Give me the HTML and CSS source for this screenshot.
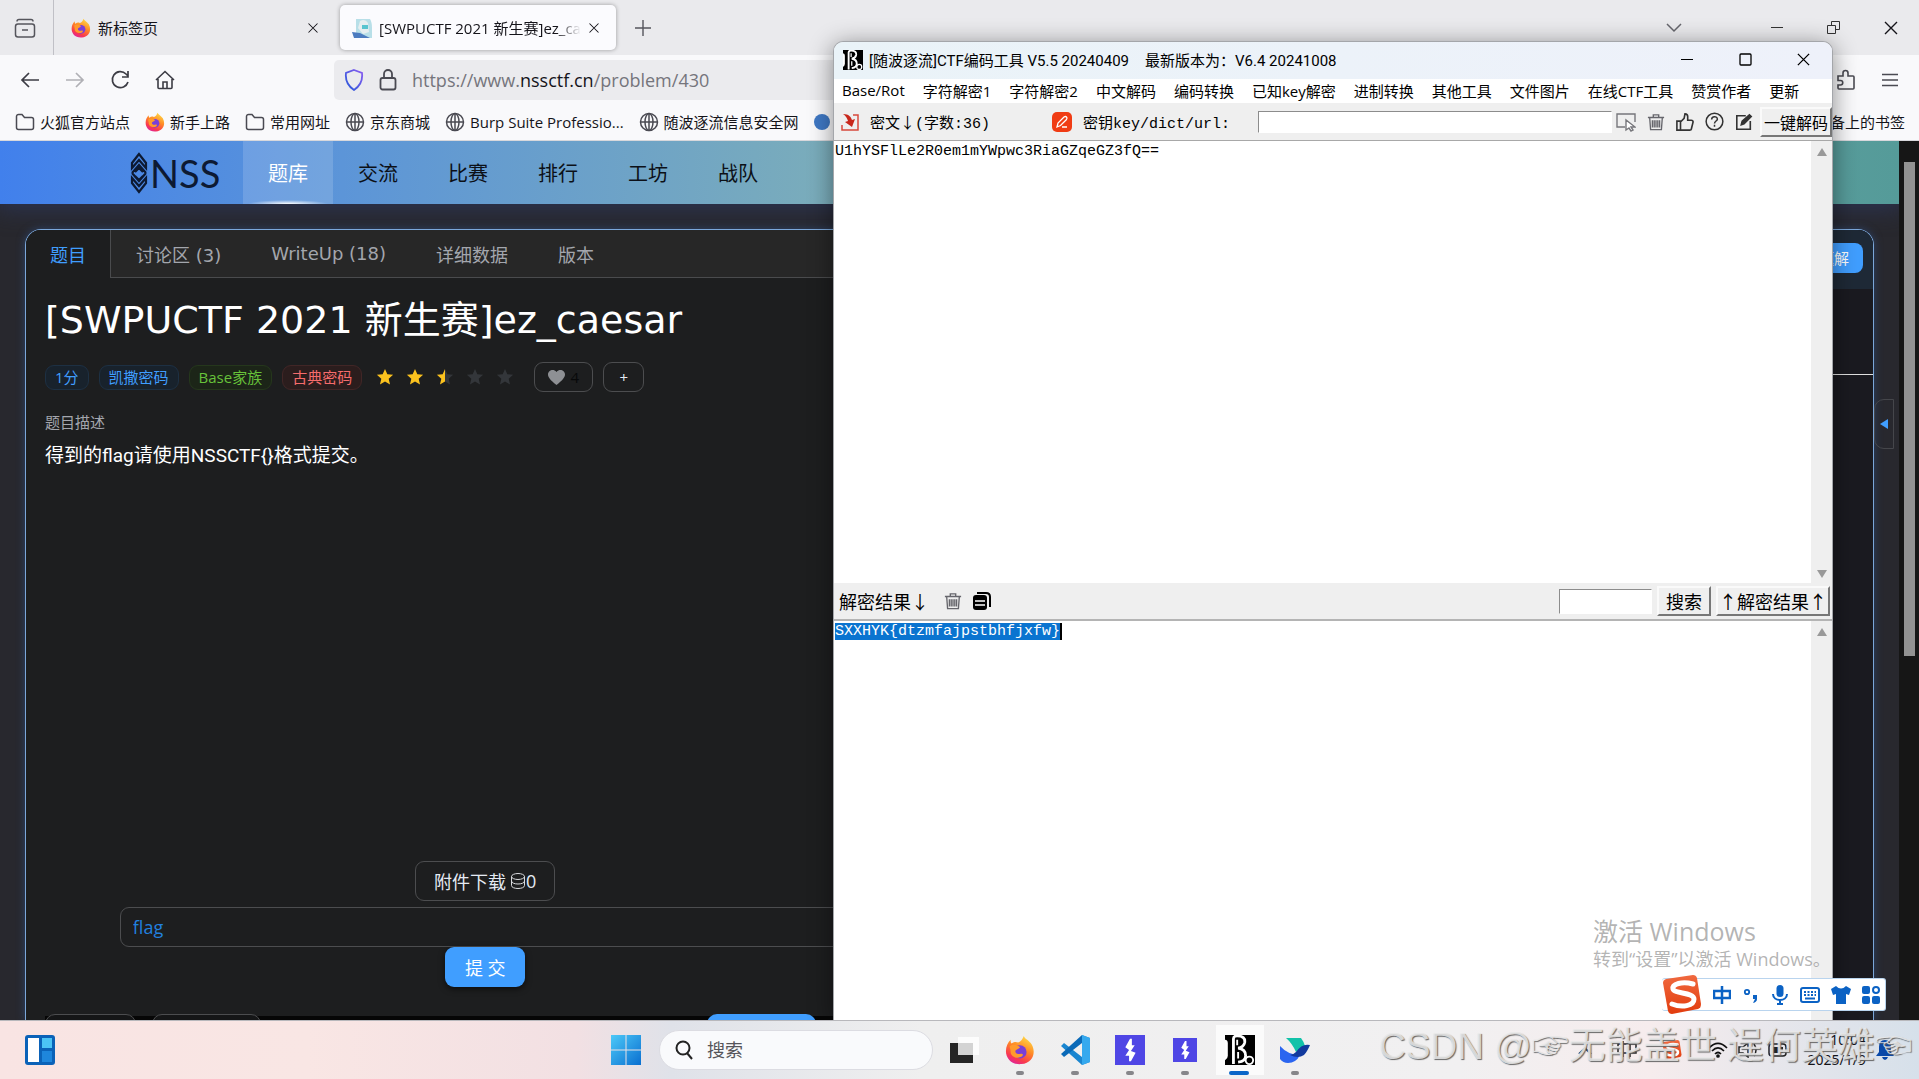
FILE: index.html
```html
<!DOCTYPE html>
<html lang="zh-CN">
<head>
    <meta charset="UTF-8">
    <meta name="viewport" content="width=device-width, initial-scale=1.0">
    <title>[SWPUCTF 2021 新生赛]ez_caesar</title>
    <link rel="stylesheet" href="styles.css">
</head>
<body>
    <svg class="sprite" aria-hidden="true">
        <defs>
            <linearGradient id="fire" x1="0.8" y1="0" x2="0.3" y2="1">
                <stop offset="0" stop-color="#ffe14a"/>
                <stop offset="0.45" stop-color="#ff8a26"/>
                <stop offset="0.8" stop-color="#f9394e"/>
                <stop offset="1" stop-color="#e0259a"/>
            </linearGradient>
            <linearGradient id="win" x1="0" y1="0" x2="1" y2="1">
                <stop offset="0" stop-color="#4cc9f8"/>
                <stop offset="1" stop-color="#0a6fd0"/>
            </linearGradient>
            <linearGradient id="shieldLine" x1="0" y1="1" x2="1" y2="0">
                <stop offset="0" stop-color="#2458d8"/>
                <stop offset="1" stop-color="#8a5cf0"/>
            </linearGradient>
            <linearGradient id="sogou" x1="0" y1="0" x2="0" y2="1">
                <stop offset="0" stop-color="#f0693f"/>
                <stop offset="1" stop-color="#e23c0d"/>
            </linearGradient>
        </defs>
        <symbol id="firefox" viewBox="0 0 32 32">
            <path fill="url(#fire)" d="M20 1c1 3 6 5 8.500 9 5 9 1 20-11 21C7 32 1 25 1 17c0-5 2-9 5-12 0 2 0 3 1 4 3-2 5-2 7-1 3-1 5-4 6-7z"/>
            <circle cx="16" cy="18" r="7" fill="#7a3fd8"/>
            <path fill="#ff9a2c" d="M5 12c4-3 9-1 11 1-1 2-4 2-5 4 0 3 3 4 6 3 2 0 3 1 1 3-5 3-12 0-12-5 0-3-1-4-1-6z"/>
        </symbol>
        <symbol id="folder" viewBox="0 0 20 20">
            <path fill="none" stroke="#4a4a52" stroke-width="1.5" d="M1.500 4.500a2 2 0 0 1 2-2h3.500l2.500 3h7a2 2 0 0 1 2 2v8a2 2 0 0 1-2 2h-13a2 2 0 0 1-2-2z"/>
        </symbol>
        <symbol id="globe" viewBox="0 0 20 20">
            <g fill="none" stroke="#4a4a52" stroke-width="1.500">
                <circle cx="10" cy="10" r="8.500"/>
                <ellipse cx="10" cy="10" rx="4" ry="8.500"/>
                <path d="M1.500 10h17M10 1.500v17"/>
            </g>
        </symbol>
        <symbol id="close" viewBox="0 0 16 16">
            <path fill="none" stroke="currentColor" stroke-width="1.400" d="M2 2l12 12M14 2L2 14"/>
        </symbol>
        <symbol id="trash" viewBox="0 0 20 20">
            <g fill="none" stroke="#66666c" stroke-width="1.500">
                <path d="M1 5h18M7 4.500V2h6v2.500M3 5.500l1 13h12l1-13M8 8v8M10 8v8M12 8v8M6 8v8M14 8v8"/>
            </g>
        </symbol>
        <symbol id="star" viewBox="0 0 20 20">
            <path d="M10 1l2.600 6 6.400.600-4.900 4.300 1.500 6.500L10 15l-5.600 3.400 1.500-6.500L1 7.600 7.400 7z"/>
        </symbol>
        <symbol id="bolt" viewBox="0 0 32 32">
            <path fill="#4f46e5" d="M0 0h32v32H0z"/>
            <path fill="#fff" d="M16 4h2v7h3l-4 6 5 2-5 9h-2v-6h-4l4-6-4-3z"/>
        </symbol>
        <symbol id="blogo" viewBox="0 0 32 32">
            <path d="M0 0h32v32H0z"/>
            <path fill="#fff" d="M0 5q3 0 3 4v13q0 3-3 5z"/>
            <path fill="none" stroke="#fff" stroke-width="3" d="M9 31V4q0-3 4-3 9 0 8 7-1 5-7 6 8 1 8 8 0 6-8 7"/>
            <path fill="none" stroke="#fff" stroke-width="2" d="M13 5v6M14 18v7"/>
            <circle cx="26" cy="27" r="4" fill="none" stroke="#fff" stroke-width="2"/>
        </symbol>
        <symbol id="slogo" viewBox="0 0 40 40">
            <path fill="url(#sogou)" d="M1 8q0-3 3-4L31 0q3 0 4 3l4 26q0 4-3 5L10 39q-3 0-4-3z"/>
            <path fill="none" stroke="#fff" stroke-width="5" stroke-linecap="round" d="M31 9C20 6 10 9 11 14s21 3 21 10-12 9-22 5"/>
        </symbol>
    </svg>

    <main class="browser">
        <div class="tabstrip">
            <button class="icon-btn recent" aria-label="最近浏览">
                <svg width="22" height="22" viewBox="0 0 22 22" fill="none" stroke="#55555c" stroke-width="1.500"><rect x="1.500" y="7" width="19" height="13" rx="2.500"/><path d="M3 4.500q0-2 2-2h12q2 0 2 2M8 13h6"/></svg>
            </button>
            <div class="tab">
                <svg width="20" height="20"><use href="#firefox"/></svg>
                <span class="tab-title">新标签页</span>
                <button class="icon-btn" aria-label="关闭"><svg width="12" height="12"><use href="#close"/></svg></button>
            </div>
            <div class="tab active">
                <svg width="20" height="20" viewBox="0 0 20 20"><path fill="#b8dfe8" d="M4 1h14q2 3 2 9v10H4z"/><path fill="#e6eef0" d="M8 3q5-3 8 2l1 9-6 2-5-6z"/><path fill="#58c4cf" d="M10 7h6v4h-6z"/><path fill="#4c7cc0" d="M0 14l8 1 10 5H2z"/></svg>
                <span class="tab-title fade">[SWPUCTF 2021 新生赛]ez_caesar</span>
                <button class="icon-btn" aria-label="关闭"><svg width="12" height="12"><use href="#close"/></svg></button>
            </div>
            <button class="icon-btn plus" aria-label="新建标签页"><svg width="16" height="16" viewBox="0 0 16 16" stroke="#55555c" stroke-width="1.400"><path d="M8 0v16M0 8h16"/></svg></button>
            <div class="window-controls">
                <button class="icon-btn chevron" aria-label="标签列表"><svg width="16" height="10" viewBox="0 0 16 10" fill="none" stroke="#66666c" stroke-width="1.500"><path d="M1 1l7 7 7-7"/></svg></button>
                <button class="icon-btn" aria-label="最小化"><svg width="12" height="12" viewBox="0 0 12 12" stroke="#333"><path d="M0 5.500h12"/></svg></button>
                <button class="icon-btn" aria-label="还原"><svg width="13" height="13" viewBox="0 0 13 13" fill="none" stroke="#333"><path d="M.500 4.500h8v8h-8zM4.500 4V.500h8v8H9"/></svg></button>
                <button class="icon-btn" aria-label="关闭窗口"><svg width="16" height="16"><use href="#close"/></svg></button>
            </div>
        </div>

        <div class="navbar">
            <div class="nav-buttons">
                <button class="icon-btn" aria-label="后退"><svg width="20" height="16" viewBox="0 0 20 16" fill="none" stroke="#3c3c44" stroke-width="1.700"><path d="M19 8H2M9 1L2 8l7 7"/></svg></button>
                <button class="icon-btn" aria-label="前进"><svg width="20" height="16" viewBox="0 0 20 16" fill="none" stroke="#b0b0b5" stroke-width="1.700"><path d="M1 8h17M11 1l7 7-7 7"/></svg></button>
                <button class="icon-btn" aria-label="刷新"><svg width="20" height="20" viewBox="0 0 20 20" fill="none" stroke="#3c3c44" stroke-width="1.700"><path d="M18 12a8 8 0 1 1-2-8l2 2M18 1v6h-6"/></svg></button>
                <button class="icon-btn" aria-label="主页"><svg width="20" height="20" viewBox="0 0 20 20" fill="none" stroke="#3c3c44" stroke-width="1.600"><path d="M1 10l9-8.500L19 10M3 9v8.500q0 1 1 1h12q1 0 1-1V9M8 18v-6h4v6"/></svg></button>
            </div>
            <div class="urlbar">
                <svg width="20" height="22" viewBox="0 0 20 22" fill="none" stroke="url(#shieldLine)" stroke-width="1.800"><path d="M10 1l8 3c1 8-2 13-8 17C4 17 1 12 2 4z"/></svg>
                <svg width="18" height="22" viewBox="0 0 18 22" fill="none" stroke="#4a4a52" stroke-width="1.800"><rect x="1.500" y="9" width="15" height="11.500" rx="2"/><path d="M5 9V5a4 4 0 0 1 8 0v4"/></svg>
                <a class="url" href="#">https://www.<b>nssctf.cn</b>/problem/430</a>
            </div>
            <button class="icon-btn ext" aria-label="扩展"><svg width="20" height="22" viewBox="0 0 20 22" fill="none" stroke="#4a4a52" stroke-width="1.600"><path d="M2 7h5V4a2.500 2.500 0 0 1 5 0v3h5q1 0 1 1v11q0 1-1 1H3q-1 0-1-1v-3h2.500a2 2 0 0 0 0-4.500H2z"/></svg></button>
            <button class="icon-btn" aria-label="菜单"><svg width="16" height="14" viewBox="0 0 16 14" stroke="#4a4a52" stroke-width="1.500"><path d="M0 1.500h16M0 7h16M0 12.500h16"/></svg></button>
        </div>

        <nav class="bookmarks">
            <a href="#"><svg width="20" height="20"><use href="#folder"/></svg>火狐官方站点</a>
            <a href="#"><svg width="20" height="20"><use href="#firefox"/></svg>新手上路</a>
            <a href="#"><svg width="20" height="20"><use href="#folder"/></svg>常用网址</a>
            <a href="#"><svg width="20" height="20"><use href="#globe"/></svg>京东商城</a>
            <a href="#"><svg width="20" height="20"><use href="#globe"/></svg>Burp Suite Professio...</a>
            <a href="#"><svg width="20" height="20"><use href="#globe"/></svg>随波逐流信息安全网</a>
            <a href="#"><svg width="16" height="16" viewBox="0 0 16 16"><circle cx="8" cy="8" r="8" fill="#3f78c4"/></svg></a>
            <a class="mobile" href="#"><svg width="20" height="20"><use href="#folder"/></svg>移动设备上的书签</a>
        </nav>

        <div class="viewport">
            <div class="site">
                <header class="site-header">
                    <a class="logo" href="#" aria-label="NSS">
                        <svg width="18" height="42" viewBox="0 0 18 42" fill="none" stroke="#0d1a33" stroke-width="2.200"><path d="M9 2L2 11v5l7-8 7 8v-5zM2 21l7-8 7 8M2 21l7 8 7-8M5 20l4-4 4 4M5 24l4 4 4-4M2 26v5l7 9 7-9v-5l-7 8z"/></svg>
                        <span>NSS</span>
                    </a>
                    <nav class="site-nav">
                        <a class="current" href="#">题库</a>
                        <a href="#">交流</a>
                        <a href="#">比赛</a>
                        <a href="#">排行</a>
                        <a href="#">工坊</a>
                        <a href="#">战队</a>
                    </nav>
                </header>

                <div class="card">
                    <section class="problem">
                        <div class="problem-tabs">
                            <button class="selected">题目</button>
                            <button>讨论区 (3)</button>
                            <button>WriteUp (18)</button>
                            <button>详细数据</button>
                            <button>版本</button>
                        </div>
                        <div class="problem-body">
                            <h1>[SWPUCTF 2021 新生赛]ez_caesar</h1>
                            <div class="tags">
                                <span class="tag blue">1分</span>
                                <span class="tag blue">凯撒密码</span>
                                <span class="tag green">Base家族</span>
                                <span class="tag red">古典密码</span>
                                <span class="stars">
                                    <svg width="18" height="18" fill="#fbc21e"><use href="#star"/></svg>
                                    <svg width="18" height="18" fill="#fbc21e"><use href="#star"/></svg>
                                    <svg width="18" height="18" viewBox="0 0 20 20"><path fill="#33363a" d="M10 1l2.600 6 6.400.600-4.900 4.300 1.500 6.500L10 15z"/><path fill="#fbc21e" d="M10 1v14l-5.600 3.400 1.500-6.500L1 7.600 7.400 7z"/></svg>
                                    <svg width="18" height="18" fill="#33363a"><use href="#star"/></svg>
                                    <svg width="18" height="18" fill="#33363a"><use href="#star"/></svg>
                                </span>
                                <button class="pill like"><svg width="17" height="15" viewBox="0 0 17 15"><path fill="#8e9094" d="M8.500 15C2 10 0 7 0 4.500 0 1 5-2 8.500 2 12-2 17 1 17 4.500 17 7 15 10 8.500 15z"/></svg><span>4</span></button>
                                <button class="pill">+</button>
                            </div>
                            <p class="label">题目描述</p>
                            <p class="desc">得到的flag请使用NSSCTF{}格式提交。</p>
                            <form class="submit-area">
                                <button type="button" class="download">附件下载 <span class="coins"><svg width="16" height="16" viewBox="0 0 16 16" fill="none" stroke="#d8dadd"><ellipse cx="8" cy="3.500" rx="6.500" ry="3"/><path d="M1.500 3.500v9c0 4 13 4 13 0v-9M1.500 8c0 4 13 4 13 0"/></svg>0</span></button>
                                <input type="text" placeholder="flag" aria-label="flag">
                                <button type="button" class="primary">提 交</button>
                            </form>
                            <div class="footer-buttons">
                                <button class="ghost small" aria-label="上一题"></button>
                                <button class="ghost" aria-label="下一题"></button>
                                <button class="blue-btn" aria-label="题解"></button>
                            </div>
                        </div>
                    </section>
                    <aside class="side">
                        <div class="side-head"><button>查看题解</button></div>
                        <div class="side-line"></div>
                    </aside>
                </div>
                <button class="collapse" aria-label="收起"><svg width="8" height="10" viewBox="0 0 8 10"><path fill="#409eff" d="M8 0v10L0 5z"/></svg></button>
            </div>
            <div class="page-scroll"><div class="thumb"></div></div>
        </div>
    </main>

    <section class="tool">
        <div class="titlebar">
            <svg width="20" height="20"><use href="#blogo"/></svg>
            <span>[随波逐流]CTF编码工具 V5.5 20240409</span>
            <span class="latest">最新版本为：V6.4 20241008</span>
            <div class="title-controls">
                <button class="icon-btn" aria-label="最小化"><svg width="12" height="12" viewBox="0 0 12 12" stroke="#000"><path d="M0 5.500h12"/></svg></button>
                <button class="icon-btn" aria-label="最大化"><svg width="13" height="13" viewBox="0 0 13 13" fill="none" stroke="#000" stroke-width="1.300"><rect x="1" y="1" width="11" height="11" rx="1"/></svg></button>
                <button class="icon-btn" aria-label="关闭"><svg width="15" height="15"><use href="#close"/></svg></button>
            </div>
        </div>
        <nav class="menu">
            <a href="#">Base/Rot</a>
            <a href="#">字符解密1</a>
            <a href="#">字符解密2</a>
            <a href="#">中文解码</a>
            <a href="#">编码转换</a>
            <a href="#">已知key解密</a>
            <a href="#">进制转换</a>
            <a href="#">其他工具</a>
            <a href="#">文件图片</a>
            <a href="#">在线CTF工具</a>
            <a href="#">赞赏作者</a>
            <a href="#">更新</a>
        </nav>
        <div class="toolbar">
            <svg width="18" height="18" viewBox="0 0 18 18"><path fill="none" stroke="#d8493c" stroke-width="1.500" d="M12 2h5v15H1v-5"/><path fill="#c8281c" d="M2 1c6 0 8 3 9 6l3-1-3 8-7-5 3-1C6 5 5 3 2 1z"/></svg>
            <label class="cipher" for="cipher">密文<span class="arrow">↓</span>(字数:36)</label>
            <svg class="pen" width="20" height="20" viewBox="0 0 20 20"><rect width="20" height="20" rx="5" fill="#f03c14"/><path fill="none" stroke="#fff" stroke-width="1.300" d="M5 15l1-4 6-6q1.500-1 2.500 0t0 2.500l-6 6zM10 15h5"/></svg>
            <label for="key">密钥key/dict/url:</label>
            <input type="text" id="key">
            <div class="tool-icons">
                <svg width="20" height="20" viewBox="0 0 20 20" fill="none" stroke="#77777c" stroke-width="1.400"><path d="M9 15H1V2h18v8"/><path fill="#fff" d="M10 8v10l3-2 2 3 2-1-2-3h4z"/></svg>
                <svg width="18" height="18"><use href="#trash"/></svg>
                <svg width="18" height="18" viewBox="0 0 20 20" fill="none" stroke="#333" stroke-width="1.800"><path d="M1 9h4v10H1zM5 10l4-4 1-5q3 0 3 3v4h4q2 0 2 2l-2 8q0 1-2 1H5"/></svg>
                <svg width="19" height="19" viewBox="0 0 20 20" fill="none" stroke="#333" stroke-width="1.600"><circle cx="10" cy="10" r="8.800"/><path d="M7 8c0-4 6-4 6-.500C13 9.500 10 9.500 10 12M10 13.500v2"/></svg>
                <svg width="18" height="18" viewBox="0 0 20 20" fill="none" stroke="#333" stroke-width="1.800"><path d="M12 3H2v15h15V9"/><path fill="#333" d="M7 13l1-4 8-7 2 2-8 8z"/></svg>
            </div>
            <button class="raised">一键解码</button>
        </div>
        <div class="pane">
            <textarea id="cipher" spellcheck="false">U1hYSFlLe2R0em1mYWpwc3RiaGZqeGZ3fQ==</textarea>
            <div class="pane-scroll"><i class="up"></i><i class="down"></i></div>
        </div>
        <div class="midbar">
            <span>解密结果<span class="arrow">↓</span></span>
            <svg width="18" height="18"><use href="#trash"/></svg>
            <svg width="20" height="20" viewBox="0 0 20 20"><path fill="none" stroke="#000" stroke-width="2" d="M5 2h9q4 0 4 4v10"/><rect x="1" y="4" width="14" height="15" rx="3"/><path stroke="#fff" stroke-width="1.500" d="M3 10h10M3 14h10"/></svg>
            <input type="text" aria-label="搜索">
            <button class="raised">搜索</button>
            <button class="raised wide"><span class="arrow">↑</span>解密结果<span class="arrow">↑</span></button>
        </div>
        <div class="pane result">
            <div class="output" contenteditable="true" role="textbox" aria-label="解密结果" spellcheck="false"><mark>SXXHYK{dtzmfajpstbhfjxfw}</mark></div>
            <div class="pane-scroll"><i class="up"></i></div>
        </div>
    </section>

    <div class="activate">
        <p class="big">激活 Windows</p>
        <p>转到“设置”以激活 Windows。</p>
    </div>

    <div class="ime">
        <svg class="ime-logo" width="40" height="40"><use href="#slogo"/></svg>
        <svg width="18" height="18" viewBox="0 0 18 18" fill="none" stroke="#0b62c4" stroke-width="2.500"><path d="M1 5h16v7H1zM9 0v18"/></svg>
        <svg width="18" height="18" viewBox="0 0 18 18"><circle cx="5" cy="6" r="2.200" fill="none" stroke="#0b62c4" stroke-width="1.800"/><path fill="#0b62c4" d="M11 9h4v4q0 3-4 4l2-4h-2z"/></svg>
        <svg width="18" height="20" viewBox="0 0 18 20"><rect x="5.500" width="7" height="12" rx="3.500" fill="#0b62c4"/><path fill="none" stroke="#0b62c4" stroke-width="2" d="M2 9c0 8 14 8 14 0M9 15v3M6 19h6"/></svg>
        <svg width="20" height="16" viewBox="0 0 20 16"><rect x="1" y="1" width="18" height="14" rx="2" fill="none" stroke="#0b62c4" stroke-width="2"/><path stroke="#0b62c4" stroke-width="2" stroke-dasharray="2 1.500" d="M4 5h12M4 8h12"/><path stroke="#0b62c4" stroke-width="2" d="M5 11.500h10"/></svg>
        <svg width="20" height="18" viewBox="0 0 20 18"><path fill="#0b62c4" d="M5 0q5 5 10 0l5 3-2 6-3-1v10H5V8L2 9 0 3z"/></svg>
        <svg width="18" height="18" viewBox="0 0 18 18" fill="#0b62c4"><rect width="8" height="8" rx="2"/><rect y="10" width="8" height="8" rx="2"/><rect x="10" y="10" width="8" height="8" rx="2"/><circle cx="14" cy="4" r="3" fill="none" stroke="#0b62c4" stroke-width="2"/></svg>
    </div>

    <footer class="taskbar">
        <button class="icon-btn widgets" aria-label="小组件"><svg width="30" height="30" viewBox="0 0 30 30"><rect width="30" height="30" rx="3" fill="#0b62b8"/><rect x="3" y="3" width="11" height="24" fill="#fff"/><rect x="17" y="3" width="10" height="10" fill="#4cc4f5"/><rect x="17" y="16" width="10" height="11" fill="#1e86dc"/></svg></button>
        <div class="apps">
            <button class="icon-btn" aria-label="开始"><svg width="30" height="30" viewBox="0 0 30 30" fill="url(#win)"><path d="M0 0h14.500v14.500H0zM15.500 0H30v14.500H15.500zM0 15.500h14.500V30H0zM15.500 15.500H30V30H15.500z"/></svg></button>
            <label class="search">
                <svg width="20" height="20" viewBox="0 0 20 20" fill="none" stroke="#222" stroke-width="2"><circle cx="9" cy="8" r="6.500"/><path d="M13 13l5 6"/></svg>
                <input type="text" placeholder="搜索" aria-label="搜索">
            </label>
            <button class="app" aria-label="任务视图"><svg width="30" height="30" viewBox="0 0 30 30"><path fill="#252525" d="M0 8h23v20H0z"/><path fill="#fff" opacity="0.800" d="M8 2h21v18H8z"/></svg></button>
            <button class="app run" aria-label="Firefox"><svg width="30" height="30"><use href="#firefox"/></svg></button>
            <button class="app run" aria-label="VS Code"><svg width="30" height="30" viewBox="0 0 30 30"><path fill="#1a86d0" d="M22 0l8 3v24l-8 3L1 11l3-3 18 14z"/><path fill="#0a6ab8" d="M22 0v8L4 22l-3-3z"/><path fill="#35a9ee" d="M22 0l8 3v24l-8 3z"/></svg></button>
            <button class="app run" aria-label="Burp Suite"><svg width="30" height="30"><use href="#bolt"/></svg></button>
            <button class="app run" aria-label="Burp Suite"><svg width="24" height="24"><use href="#bolt"/></svg></button>
            <button class="app run focus" aria-label="CTF编码工具"><svg width="30" height="30"><use href="#blogo"/></svg></button>
            <button class="app run" aria-label="飞书"><svg width="30" height="30" viewBox="0 0 30 30"><path fill="#12c2a9" d="M6 3h15q3 4 4 8l-9 6Q12 8 6 3z"/><path fill="#2b65f0" d="M0 11q8 9 20 9-4 8-12 8-5 0-8-4z"/><path fill="#123a9e" d="M30 10q-8-2-14 7-3 3-6 3 8 4 14 0 3-3 6-10z"/></svg></button>
        </div>
        <div class="tray">
            <div class="tray-apps">
                <svg width="14" height="9" viewBox="0 0 14 9" fill="none" stroke="#222" stroke-width="1.800"><path d="M1 8l6-6 6 6"/></svg>
                <svg width="20" height="18" viewBox="0 0 20 18" fill="none" stroke="#222" stroke-width="1.500"><path d="M1 3h18v9H1zM6 0v16M13 0v16"/></svg>
                <svg width="20" height="20"><use href="#slogo"/></svg>
            </div>
            <div class="tray-system">
                <svg width="20" height="16" viewBox="0 0 20 16" fill="none" stroke="#111" stroke-width="1.700"><path d="M1 6q9-9 18 0M4 9q6-6 12 0M7 12q3-3 6 0"/><circle cx="10" cy="14" r="1"/></svg>
                <svg width="20" height="16" viewBox="0 0 20 16" fill="none" stroke="#222" stroke-width="1.500"><path d="M1 5h4l5-4v14l-5-4H1zM13 5q2 3 0 6M16 2q4 6 0 12"/></svg>
                <svg width="22" height="14" viewBox="0 0 22 14"><rect x="1" y="1" width="17" height="12" rx="3" fill="none" stroke="#222" stroke-width="1.500"/><path fill="#222" d="M4 4h11v6H4zM19 5h3v4h-3z"/></svg>
            </div>
            <time class="clock">10:04<br>2025/1/9</time>
            <svg width="18" height="20" viewBox="0 0 18 20" fill="#0a48a8"><path d="M9 0q6 0 6 7v5l3 4H0l3-4V7q0-7 6-7zM6 17h6q-1 3-3 3t-3-3z"/></svg>
        </div>
    </footer>
    <div class="watermark">CSDN @☞无能盖世 逞何英雄☜</div>
</body>
</html>
```
FILE: styles.css
```css
* {
    box-sizing: border-box;
}
body {
    margin: 0;
    height: 100vh;
    display: flex;
    flex-direction: column;
    overflow: hidden;
    position: relative;
    font-family: "Open Sans", "Noto Sans CJK SC", sans-serif;
    font-size: 15px;
    color: #15141a;
}
button, input, textarea {
    font: inherit;
    color: inherit;
}
a {
    color: inherit;
    text-decoration: none;
}
p, h1 {
    margin: 0;
    font-weight: normal;
}
svg {
    flex: none;
    display: block;
}
.sprite {
    position: absolute;
    width: 0;
    height: 0;
}
.icon-btn {
    background: none;
    border: none;
    padding: 0;
    display: flex;
    align-items: center;
    justify-content: center;
    flex: none;
}

/* browser */
.browser {
    flex: 1;
    min-height: 0;
    display: flex;
    flex-direction: column;
}
.tabstrip {
    height: 55px;
    background: #eaeaed;
    display: flex;
    align-items: center;
}
.recent {
    width: 54px;
    height: 55px;
    padding-right: 4px;
    border-right: 1px solid #c0c0c6;
}
.tab {
    width: 276px;
    height: 45px;
    margin-left: 5px;
    padding: 0 16px 0 12px;
    display: flex;
    align-items: center;
    gap: 7px;
}
.tab.active {
    background: #fbfbfe;
    border-radius: 5px;
    box-shadow: 0 0 4px rgba(0, 0, 0, 0.35);
}
.tab-title {
    flex: 1;
    white-space: nowrap;
    overflow: hidden;
}
.fade {
    mask-image: linear-gradient(90deg, #000 88%, transparent);
}
.plus {
    margin-left: 19px;
}
.window-controls {
    margin-left: auto;
    display: flex;
}
.window-controls .icon-btn {
    width: 57px;
}
.window-controls .chevron {
    margin-right: 46px;
}
.navbar {
    height: 50px;
    background: #f9f9fb;
    display: flex;
    align-items: center;
    padding: 0 21px 0 20px;
}
.nav-buttons {
    display: flex;
    gap: 25px;
    width: 314px;
}
.urlbar {
    flex: 1;
    height: 40px;
    background: #ebebee;
    border-radius: 5px;
    display: flex;
    align-items: center;
    gap: 15px;
    padding-left: 10px;
}
.url {
    font-size: 18px;
    color: #75757c;
}
.url b {
    font-weight: normal;
    color: #15141a;
}
.ext {
    margin: 0 26px 0 240px;
}
.bookmarks {
    height: 36px;
    background: #f9f9fb;
    border-bottom: 1px solid #d8d8dc;
    display: flex;
    align-items: center;
    gap: 15px;
    padding: 0 14px 2px 15px;
    white-space: nowrap;
}
.bookmarks a {
    display: flex;
    align-items: center;
    gap: 5px;
}
.bookmarks .mobile {
    margin-left: auto;
}

/* site */
.viewport {
    flex: 1;
    min-height: 0;
    display: flex;
    overflow: hidden;
}
.site {
    flex: 1;
    min-width: 0;
    background: #28282e;
    display: flex;
    flex-direction: column;
    position: relative;
}
.page-scroll {
    width: 20px;
    background: #161616;
    padding: 21px 4px 0 5px;
    position: relative;
}
.thumb {
    height: 494px;
    background: #929292;
}
.site-header {
    height: 63px;
    flex: none;
    display: flex;
    align-items: center;
    padding-left: 130px;
    background: linear-gradient(90deg, #4180ec, #5c95d8 18%, #7badba 44%, #559b99);
    box-shadow: 0 0 24px 4px #2c3555;
}
.logo {
    width: 113px;
    display: flex;
    align-items: center;
    gap: 2px;
    font-family: Lato, sans-serif;
    font-size: 38px;
    color: #0d1a33;
}
.site-nav {
    display: flex;
    align-self: stretch;
}
.site-nav a {
    width: 90px;
    display: flex;
    align-items: center;
    justify-content: center;
    font-size: 20px;
    color: #0c1017;
}
.site-nav .current {
    color: #fff;
    background: radial-gradient(ellipse 40px 4px at 50% 100%, #fff, transparent), rgba(255, 255, 255, 0.15);
}
.card {
    flex: 1;
    min-height: 0;
    margin: 25px 25px 0;
    border: 1px solid #7ba7d9;
    border-bottom: none;
    border-radius: 16px 16px 0 0;
    display: flex;
    overflow: hidden;
    background: #1d1e1f;
    box-shadow: 0 0 8px #2d4368;
}
.problem {
    flex: 1;
    min-width: 0;
    display: flex;
    flex-direction: column;
}
.problem-tabs {
    display: flex;
    background: #272727;
    font-size: 18px;
}
.problem-tabs button {
    height: 48px;
    padding: 0 25px;
    background: none;
    border: none;
    border-bottom: 1px solid #4a4b4d;
    color: #a3a6ad;
    font-family: "DejaVu Sans", "Noto Sans CJK SC", sans-serif;
    white-space: nowrap;
}
.problem-tabs button:last-child {
    flex: 1;
    text-align: left;
}
.problem-tabs .selected {
    background: #1d1e1f;
    color: #409eff;
    border-bottom: none;
    border-right: 1px solid #4a4b4d;
    padding: 0 24px;
}
.problem-body {
    flex: 1;
    display: flex;
    flex-direction: column;
    align-items: flex-start;
    padding: 12px 24px 0 19px;
}
h1 {
    font-family: "DejaVu Sans", "Noto Sans CJK SC", sans-serif;
    font-size: 38px;
    line-height: 60px;
    color: #fff;
}
.tags {
    display: flex;
    align-items: center;
    gap: 10px;
    margin-top: 11px;
    height: 32px;
}
.tag {
    height: 25px;
    line-height: 23px;
    padding: 0 9px;
    border: 1px solid;
    border-radius: 9px;
}
.tag.blue {
    background: #18222c;
    border-color: #1d3043;
    color: #409eff;
}
.tag.green {
    background: #1c2518;
    border-color: #25371c;
    color: #67c23a;
}
.tag.red {
    background: #2b1d1d;
    border-color: #412626;
    color: #f56c6c;
}
.stars {
    display: flex;
    gap: 12px;
    margin: 0 10px 0 4px;
}
.pill {
    height: 30px;
    min-width: 41px;
    padding: 0 12px;
    display: flex;
    align-items: center;
    justify-content: center;
    gap: 5px;
    background: none;
    border: 1px solid #4c4d4f;
    border-radius: 9px;
    color: #e5eaf3;
}
.like {
    width: 59px;
    color: #08090a;
}
.label {
    margin-top: 17px;
    line-height: 24px;
    color: #a3a6ad;
}
.desc {
    margin-top: 8px;
    font-family: Roboto, "Noto Sans CJK SC", sans-serif;
    font-size: 19px;
    line-height: 28px;
    color: #fff;
}
.submit-area {
    align-self: stretch;
    margin-top: auto;
    display: flex;
    flex-direction: column;
    align-items: center;
}
.download {
    height: 40px;
    padding: 0 18px;
    display: flex;
    align-items: center;
    gap: 4px;
    background: none;
    border: 1px solid #4c4d4f;
    border-radius: 9px;
    font-size: 18px;
    color: #e5eaf3;
    margin-bottom: 6px;
}
.coins {
    display: flex;
    align-items: center;
}
.submit-area input {
    width: 83%;
    height: 40px;
    padding: 0 12px;
    background: none;
    border: 1px solid #4c4d4f;
    border-radius: 9px;
    font-size: 18px;
}
.submit-area input::placeholder {
    color: #2280df;
}
.primary {
    width: 80px;
    height: 40px;
    border: none;
    border-radius: 9px;
    background: #409eff;
    color: #fff;
    font-size: 18px;
    box-shadow: 0 2px 6px rgba(0, 0, 0, 0.6);
}
.footer-buttons {
    align-self: stretch;
    display: flex;
    height: 6px;
    margin-top: 27px;
    padding-right: 110px;
    gap: 16px;
    background: linear-gradient(transparent 2px, #060606 2px);
}
.footer-buttons button {
    height: 40px;
    width: 109px;
    border: 1px solid #4c4d4f;
    border-radius: 10px;
    background: #151617;
    padding: 0;
}
.footer-buttons .small {
    width: 91px;
}
.footer-buttons .blue-btn {
    margin-left: auto;
    background: #409eff;
    border: none;
}
.side {
    width: 50%;
    background: #1a1a20;
}
.side-head {
    height: 59px;
    display: flex;
    align-items: center;
    justify-content: flex-end;
    padding: 0 10px 4px;
    background: #1e2936;
}
.side-head button {
    height: 30px;
    padding: 0 14px;
    border: none;
    border-radius: 8px;
    background: #409eff;
    color: #fff;
}
.side-line {
    height: 86px;
    border-bottom: 1px solid #e0e0e0;
}
.collapse {
    position: absolute;
    right: 5px;
    top: 258px;
    width: 20px;
    height: 50px;
    background: none;
    border: 1px solid #45464b;
    border-radius: 10px 0 0 10px;
    display: flex;
    align-items: center;
    justify-content: center;
    padding: 0;
}

/* tool window */
.tool {
    position: absolute;
    left: 833px;
    top: 41px;
    bottom: 59px;
    width: 1000px;
    display: flex;
    flex-direction: column;
    background: #efefef;
    border: 1px solid #a4a6aa;
    border-bottom: none;
    border-radius: 10px 10px 0 0;
    box-shadow: 0 4px 24px rgba(0, 0, 0, 0.45);
    overflow: hidden;
    color: #000;
}
.titlebar {
    height: 37px;
    flex: none;
    display: flex;
    align-items: center;
    padding: 0 0 2px 9px;
    gap: 6px;
    background: linear-gradient(90deg, #eaf3f8, #eef1fa);
    font-family: Roboto, "Noto Sans CJK SC", sans-serif;
}
.latest {
    margin-left: 10px;
}
.title-controls {
    margin-left: auto;
    display: flex;
}
.title-controls .icon-btn {
    width: 58px;
}
.menu {
    height: 24px;
    flex: none;
    background: #fff;
    display: flex;
    align-items: center;
    gap: 18px;
    padding: 0 0 2px 8px;
    white-space: nowrap;
}
.toolbar, .midbar {
    flex: none;
    height: 38px;
    display: flex;
    align-items: center;
    background: #efefef;
    font-family: "Liberation Mono", "Noto Sans CJK SC", monospace;
}
.arrow {
    font-family: "Noto Sans CJK SC", sans-serif;
}
.toolbar {
    padding-left: 7px;
    border-bottom: 1px solid #a8a8a8;
    white-space: nowrap;
}
.toolbar label {
    margin-left: 11px;
}
.toolbar .cipher {
    width: 182px;
}
.toolbar input {
    flex: 1;
    min-width: 0;
    height: 22px;
    margin-left: 28px;
}
.toolbar input, .midbar input {
    border: 1px solid;
    border-color: #8c8c8c #fff #fff #8c8c8c;
    background: #fff;
}
.tool-icons {
    display: flex;
    align-items: center;
    gap: 11px;
    padding: 0 7px 0 4px;
}
.raised {
    height: 30px;
    padding: 0 2px;
    background: #efefef;
    border: 2px solid;
    border-color: #fafafa #777 #777 #fafafa;
    font-size: 16px;
    white-space: nowrap;
}
.pane {
    height: 442px;
    flex: none;
    display: flex;
    background: #fff;
}
.pane.result {
    height: auto;
    flex: 1;
}
.pane textarea, .output {
    flex: 1;
    border: none;
    padding: 2px 0 0 1px;
    margin: 0;
    resize: none;
    outline: none;
    overflow: hidden;
    font-family: "Liberation Mono", monospace;
    font-size: 15px;
    line-height: 18px;
}
.output mark {
    background: #0a74d0;
    color: #fff;
    border-right: 2px solid #000;
}
.pane-scroll {
    width: 21px;
    background: #efefef;
    display: flex;
    flex-direction: column;
    justify-content: space-between;
    align-items: center;
    padding: 7px 0 5px;
}
.pane-scroll i {
    width: 0;
    height: 0;
    border: 5px solid transparent;
}
.pane-scroll .up {
    border-top: none;
    border-bottom: 8px solid #999;
}
.pane-scroll .down {
    border-bottom: none;
    border-top: 8px solid #999;
}
.midbar {
    padding: 0 2px 0 5px;
    border-bottom: 2px solid #b4b4b4;
    font-size: 18px;
    gap: 5px;
}
.midbar svg {
    margin-left: 10px;
}
.midbar svg + svg {
    margin-left: 5px;
}
.midbar input {
    width: 93px;
    height: 25px;
    margin-left: auto;
}
.midbar .raised {
    font-size: 18px;
    padding: 0 7px;
}
.midbar .wide {
    padding: 0 1px;
}

/* desktop overlays */
.activate {
    position: absolute;
    left: 1593px;
    bottom: 108px;
    color: rgba(130, 130, 130, 0.6);
    font-size: 18px;
    line-height: 24px;
    white-space: nowrap;
}
.activate .big {
    font-size: 25px;
    line-height: 32px;
}
.ime {
    position: absolute;
    right: 33px;
    bottom: 68px;
    width: 224px;
    height: 33px;
    display: flex;
    align-items: center;
    justify-content: space-between;
    padding-right: 5px;
    background: linear-gradient(90deg, transparent 20px, #fff 20px);
    border: 1px solid #b9d4ee;
    border-left: none;
    border-radius: 3px;
}
.taskbar {
    position: relative;
    height: 59px;
    flex: none;
    display: grid;
    grid-template-columns: 1fr auto 1fr;
    align-items: center;
    padding: 0 25px;
    border-top: 1px solid #b8b8bc;
    background: linear-gradient(90deg, #f9e4e3, #f9e6e4 16%, #f2e0e3 30%, #dfe2e9 35%, #efefef 48%, #f1f0f1 76%, #f6eced 86%, #d6e0ea);
}
.widgets {
    justify-self: start;
}
.apps {
    display: flex;
    align-items: center;
    height: 58px;
    margin-left: 14px;
}
.search {
    width: 274px;
    height: 40px;
    margin: 0 4px 0 18px;
    display: flex;
    align-items: center;
    gap: 13px;
    padding-left: 14px;
    background: #f9fafc;
    border: 1px solid #dcdce2;
    border-radius: 20px;
    font-size: 18px;
}
.search input {
    flex: 1;
    min-width: 0;
    border: none;
    background: none;
    padding: 0;
}
.search input::placeholder {
    color: #55555a;
}
.app {
    position: relative;
    width: 55px;
    height: 50px;
    padding: 0;
    border: none;
    background: none;
    display: flex;
    align-items: center;
    justify-content: center;
}
.app.run::after {
    content: "";
    position: absolute;
    bottom: 0;
    left: 24px;
    width: 8px;
    height: 4px;
    border-radius: 2px;
    background: #86868a;
}
.app.focus {
    background: linear-gradient(#fbfbfb, #fbfbfb) center / 48px 50px no-repeat;
}
.app.focus::after {
    left: 17px;
    width: 20px;
    background: #0a66c8;
}
.tray, .tray-apps, .tray-system {
    display: flex;
    align-items: center;
    gap: 10px;
}
.tray {
    justify-self: end;
}
.tray-apps {
    gap: 25px;
    margin-right: 16px;
}
.clock {
    margin-left: 8px;
    font-family: "Noto Sans", sans-serif;
    font-size: 14px;
    line-height: 20px;
    text-align: right;
}
.watermark {
    position: absolute;
    right: 7px;
    bottom: 4px;
    font-family: "Liberation Sans", "Noto Sans CJK SC", sans-serif;
    font-size: 37px;
    line-height: 56px;
    white-space: nowrap;
    color: rgba(235, 235, 235, 0.85);
    text-shadow: 1px 1px 1px #666;
}
```
